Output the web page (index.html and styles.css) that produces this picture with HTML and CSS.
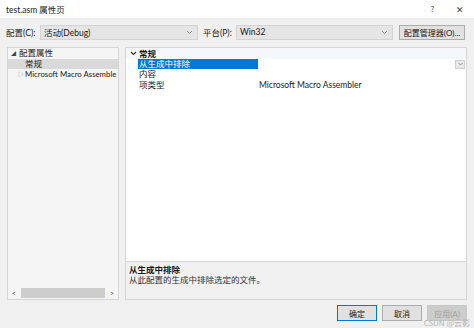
FILE: index.html
```html
<!DOCTYPE html>
<html>
<head>
<meta charset="utf-8">
<link rel="stylesheet" href="styles.css">
</head>
<body>
<div class="window">
  <div class="titlebar">
    <span class="title">test.asm 属性页</span>
    <span class="tb-btns"><span class="help">?</span><span class="close">✕</span></span>
  </div>
  <div class="toolbar">
    <span class="lbl">配置(C):</span>
    <div class="combo combo-config"><span>活动(Debug)</span><svg class="chev" width="7" height="5" viewBox="0 0 7 5"><polyline points="1,1 3.5,3.5 6,1" fill="none" stroke="#888" stroke-width="1"/></svg></div>
    <span class="lbl lbl-plat">平台(P):</span>
    <div class="combo combo-plat"><span>Win32</span><svg class="chev" width="7" height="5" viewBox="0 0 7 5"><polyline points="1,1 3.5,3.5 6,1" fill="none" stroke="#888" stroke-width="1"/></svg></div>
    <div class="btn btn-mgr">配置管理器(O)...</div>
  </div>
  <div class="main">
    <div class="tree">
      <div class="tree-items">
        <div class="node"><span class="tri">◢</span>配置属性</div>
        <div class="node sel">常规</div>
        <div class="node lvl1b"><span class="tri open">▷</span><span class="masm">Microsoft Macro Assemble</span></div>
      </div>
      <div class="hscroll"><span class="arr">&lt;</span><span class="thumb"></span><span class="arr">&gt;</span></div>
    </div>
    <div class="props">
      <div class="grid">
        <div class="cat"><svg class="cchev" width="7" height="5" viewBox="0 0 7 5"><polyline points="1,1 3.5,3.5 6,1" fill="none" stroke="#333" stroke-width="1.1"/></svg><b>常规</b></div>
        <div class="row selrow"><span class="k">从生成中排除</span><span class="v"></span><span class="dd"><svg width="5" height="4" viewBox="0 0 5 4"><polyline points="0.5,1 2.5,3 4.5,1" fill="none" stroke="#888" stroke-width="0.9"/></svg></span></div>
        <div class="row"><span class="k">内容</span><span class="v"></span></div>
        <div class="row"><span class="k">项类型</span><span class="v">Microsoft Macro Assembler</span></div>
      </div>
      <div class="desc">
        <div class="dtitle">从生成中排除</div>
        <div class="dtext">从此配置的生成中排除选定的文件。</div>
      </div>
    </div>
  </div>
  <div class="footer">
    <div class="btn fbtn ok">确定</div>
    <div class="btn fbtn">取消</div>
    <div class="btn fbtn disabled">应用(A)</div>
    <span class="wm">CSDN @云影</span>
  </div>
</div>
</body>
</html>
```
FILE: styles.css
```css
* { box-sizing: border-box; }
html, body { margin: 0; padding: 0; }
body {
  width: 474px; height: 328px; overflow: hidden;
  background: #f0f0f0;
  font-family: "Lato", "Noto Sans CJK SC", sans-serif;
  font-size: 8.5px; color: #1a1a1a;
}
.window { width: 474px; height: 328px; display: flex; flex-direction: column; position: relative; }
.titlebar {
  height: 18px; background: #fff; display: flex; align-items: center;
  justify-content: space-between; padding: 0 10px 0 6px; font-size: 8.5px;
}
.title { color: #222; }
.tb-btns { display: flex; gap: 22px; color: #444; font-size: 8px; }
.close { font-size: 9px; }
.toolbar { display: flex; align-items: center; height: 16px; margin-top: 6px; padding: 0 7px 0 6px; }
.lbl { width: 34px; flex: none; }
.lbl-plat { width: 33px; margin-left: 5px; }
.combo {
  height: 15px; background: #e5e5e5; border: 1px solid #d3d3d3;
  display: flex; align-items: center; justify-content: space-between;
  padding: 0 4px 0 3px; flex: none;
}
.combo-config { width: 158px; }
.combo-plat { width: 157px; }
.chev { display: block; }
.btn {
  background: #e1e1e1; border: 1px solid #adadad;
  display: flex; align-items: center; justify-content: center;
}
.btn-mgr { width: 66px; height: 15px; margin-left: 6px; font-size: 8px; }
.main { display: flex; gap: 6px; margin-top: 7px; padding: 0 7px; height: 253px; }
.tree {
  width: 112px; flex: none; background: #f5f5f5; border: 1px solid #d6d6d6;
  display: flex; flex-direction: column; justify-content: space-between;
}
.tree-items { padding-top: 0; }
.node { height: 10.5px; line-height: 10.5px; padding-left: 3px; white-space: nowrap; }
.tri { display: inline-block; width: 8px; font-size: 5px; color: #444; vertical-align: 1px; }
.tri.open { color: #777; font-size: 6px; width: 7px; }
.masm { font-size: 7.8px; }
.node.sel { background: #d9d9d9; padding-left: 17px; }
.node.lvl1b { padding-left: 10px; }
.hscroll { height: 11px; display: flex; align-items: center; margin: 0 1px 1px 1px; }
.arr { width: 10px; text-align: center; color: #444; font-size: 7px; }
.thumb { width: 87px; height: 10px; background: #cdcdcd; margin: 0 2px; }
.props { flex: 1; border: 1px solid #d6d6d6; display: flex; flex-direction: column; }
.grid { flex: 1; background: #fff; border-bottom: 1px solid #d6d6d6; }
.cat { height: 10.5px; background: #f5f7fa; display: flex; align-items: center; padding-left: 4px; }
.cchev { display: block; margin-right: 2px; }
.cat b { font-weight: bold; }
.row { height: 10.5px; line-height: 10.5px; display: flex; align-items: center; position: relative; }
.k { width: 120px; margin-left: 12px; padding-left: 1px; }
.v { flex: 1; padding-left: 1px; }
.selrow .k { background: #0078d7; color: #fff; }
.dd {
  position: absolute; right: 1px; top: 1px; width: 10px; height: 9px;
  background: #e8e8e8; border: 1px solid #cfcfcf;
  display: flex; align-items: center; justify-content: center;
}
.dd svg { display: block; }
.desc { height: 37px; padding: 3px 3px; }
.dtitle { font-weight: bold; line-height: 10px; }
.dtext { line-height: 10px; color: #333; }
.footer { display: flex; justify-content: flex-end; gap: 5px; padding: 5px 7px 0 0; position: relative; }
.fbtn { width: 40px; height: 16px; font-size: 8px; }
.ok { border: 1px solid #0078d7; }
.disabled { color: #a0a0a0; border-color: #c8c8c8; background: #cccccc; }
.wm { position: absolute; right: 4px; top: 17px; font-size: 8px; color: #b8b8b8; font-family: "Noto Sans CJK SC", sans-serif; }
```
